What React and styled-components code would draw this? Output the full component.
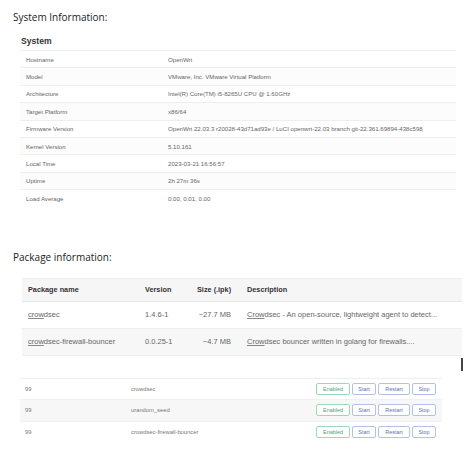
import React from "react";
import styled, { createGlobalStyle } from "styled-components";

const GlobalStyle = createGlobalStyle`
  html, body {
    margin: 0;
    padding: 0;
    background: #fff;
  }
  body {
    font-family: "Liberation Sans", Arial, sans-serif;
    color: #555;
  }
`;

const systemRows = [
  ["Hostname", "OpenWrt"],
  ["Model", "VMware, Inc. VMware Virtual Platform"],
  ["Architecture", "Intel(R) Core(TM) i5-8265U CPU @ 1.60GHz"],
  ["Target Platform", "x86/64"],
  [
    "Firmware Version",
    "OpenWrt 22.03.3 r20028-43d71ad93e / LuCI openwrt-22.03 branch git-22.361.69894-438c598",
  ],
  ["Kernel Version", "5.10.161"],
  ["Local Time", "2023-03-21 16:56:57"],
  ["Uptime", "2h 27m 36s"],
  ["Load Average", "0.00, 0.01, 0.00"],
];

const packages = [
  {
    name: "crowdsec",
    version: "1.4.6-1",
    size: "~27.7 MB",
    desc: "dsec - An open-source, lightweight agent to detect...",
  },
  {
    name: "crowdsec-firewall-bouncer",
    version: "0.0.25-1",
    size: "~4.7 MB",
    desc: "dsec bouncer written in golang for firewalls....",
  },
];

const services = ["crowdsec", "urandom_seed", "crowdsec-firewall-bouncer"];

const App = () => {
  return (
    <Page>
      <GlobalStyle />
      <SectionTitle>System Information:</SectionTitle>
      <Panel>
        <PanelTitle>System</PanelTitle>
        <InfoTable>
          {systemRows.map(([label, value], i) => (
            <InfoRow key={label} $shaded={i % 2 === 1}>
              <InfoLabel>{label}</InfoLabel>
              <InfoValue>{value}</InfoValue>
            </InfoRow>
          ))}
        </InfoTable>
      </Panel>

      <SectionTitle $top={42}>Package information:</SectionTitle>
      <PkgTable>
        <PkgHead>
          <PkgCell>Package name</PkgCell>
          <PkgCell>Version</PkgCell>
          <PkgCell $right>Size (.ipk)</PkgCell>
          <PkgCell $pad>Description</PkgCell>
        </PkgHead>
        {packages.map((p, i) => (
          <PkgRow key={p.name} $shaded={i % 2 === 1}>
            <PkgCell>
              <Squiggle>crow</Squiggle>
              {p.name.slice(4)}
            </PkgCell>
            <PkgCell>{p.version}</PkgCell>
            <PkgCell $right>{p.size}</PkgCell>
            <PkgCell $pad>
              <Squiggle>Crow</Squiggle>
              {p.desc}
            </PkgCell>
          </PkgRow>
        ))}
      </PkgTable>
      <Caret />

      <ServiceTable>
        {services.map((name, i) => (
          <ServiceRow key={name} $shaded={i % 2 === 1}>
            <ServiceCell>99</ServiceCell>
            <ServiceCell>{name}</ServiceCell>
            <Actions>
              <ActionButton $tone="green" $w={34}>
                Enabled
              </ActionButton>
              <ActionButton $w={24}>Start</ActionButton>
              <ActionButton $w={32}>Restart</ActionButton>
              <ActionButton $w={24}>Stop</ActionButton>
            </Actions>
          </ServiceRow>
        ))}
      </ServiceTable>
    </Page>
  );
};

const Page = styled.div`
  width: 474px;
  height: 449px;
  overflow: hidden;
  padding-top: 10px;
  box-sizing: border-box;
`;

const SectionTitle = styled.h2`
  margin: ${(p) => p.$top || 0}px 0 0 13px;
  font-family: "Open Sans", "Noto Sans", sans-serif;
  font-weight: 400;
  font-size: 10px;
  line-height: 14px;
  color: #222;
`;

const Panel = styled.div`
  margin: 12px 18px 0 20px;
`;

const PanelTitle = styled.h3`
  margin: 0 0 0 1px;
  font-size: 8.6px;
  line-height: 10px;
  font-weight: 700;
  color: #333;
`;

const InfoTable = styled.div`
  margin-top: 4px;
  border-top: 1px solid #eee;
`;

const InfoRow = styled.div`
  display: grid;
  grid-template-columns: 142px 1fr;
  align-items: center;
  height: 17.4px;
  box-sizing: border-box;
  padding-left: 6px;
  border-bottom: 1px solid #eee;
  background: ${(p) => (p.$shaded ? "#fcfcfc" : "#fff")};
  font-size: 6.1px;
  color: #666;

  &:last-child {
    border-bottom: none;
  }
`;

const InfoLabel = styled.div`
  white-space: nowrap;
`;

const InfoValue = styled.div`
  white-space: nowrap;
`;

const PkgTable = styled.div`
  margin: 14px 12px 0 22px;
`;

const PkgHead = styled.div`
  display: grid;
  grid-template-columns: 117px 52px 34px 1fr;
  align-items: center;
  height: 22px;
  padding-left: 6px;
  background: #f6f6f6;
  border-top: 1px solid #efefef;
  border-bottom: 1px solid #e6e6e6;
  font-weight: 700;
  font-size: 7.3px;
  color: #333;
`;

const PkgRow = styled.div`
  display: grid;
  grid-template-columns: 117px 52px 34px 1fr;
  align-items: center;
  height: 26px;
  padding-left: 6px;
  background: ${(p) => (p.$shaded ? "#f7f7f7" : "#fff")};
  border-bottom: 1px solid #eee;
  font-size: 7.5px;
  color: #666;
`;

const PkgCell = styled.div`
  white-space: nowrap;
  text-align: ${(p) => (p.$right ? "right" : "left")};
  padding-left: ${(p) => (p.$pad ? "16px" : "0")};
`;

const Squiggle = styled.span`
  text-decoration: underline;
  text-decoration-color: #888;
  text-underline-offset: 1px;
`;

const Caret = styled.div`
  width: 1.5px;
  height: 13px;
  margin: 2px 0 0 461px;
  background: #444;
`;

const ServiceTable = styled.div`
  margin: 7px 32px 0 20px;
  border-top: 1px solid #eee;
`;

const ServiceRow = styled.div`
  display: grid;
  grid-template-columns: 106px 1fr auto;
  align-items: center;
  height: 21.5px;
  box-sizing: border-box;
  padding: 0 6px 0 5px;
  border-bottom: 1px solid #f0f0f0;
  background: ${(p) => (p.$shaded ? "#f7f7f7" : "#fff")};
  font-size: 5.8px;
  color: #777;

  &:last-child {
    border-bottom: none;
  }
`;

const ServiceCell = styled.div`
  white-space: nowrap;
`;

const Actions = styled.div`
  display: flex;
  gap: 2px;
`;

const ActionButton = styled.div`
  width: ${(p) => p.$w}px;
  height: 12px;
  box-sizing: border-box;
  display: flex;
  align-items: center;
  justify-content: center;
  border-radius: 2px;
  font-size: 5.4px;
  background: #fff;
  border: 1px solid ${(p) => (p.$tone === "green" ? "#9dd9b5" : "#b3c1e3")};
  color: ${(p) => (p.$tone === "green" ? "#4aa57a" : "#5b72b8")};
`;

export default App;
